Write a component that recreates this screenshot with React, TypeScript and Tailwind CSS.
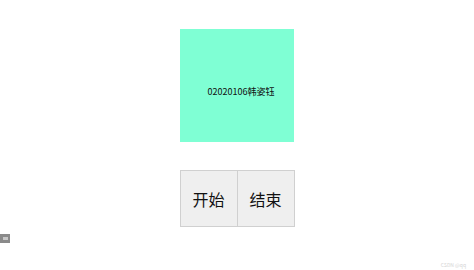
export default function App() {
  return (
    <div
      className="relative h-[270px] w-[474px] overflow-hidden bg-white"
      style={{ fontFamily: '"Noto Sans CJK SC", "Noto Sans", sans-serif' }}
    >
      <div className="flex flex-col items-center pt-[29px]">
        <div className="ml-[-1px] flex h-[113px] w-[114px] items-center justify-center bg-[#7fffd4] pl-[9px] pt-[13px] text-[9px] text-[#111]">
          02020106韩姿钰
        </div>
        <div className="mt-[28px] flex">
          <button className="flex h-[57px] w-[58px] items-center justify-center border border-[#d0d0d0] bg-[#efefef] text-[16px] text-[#111]">
            开始
          </button>
          <button className="ml-[-1px] flex h-[57px] w-[58px] items-center justify-center border border-[#d0d0d0] bg-[#efefef] text-[16px] text-[#111]">
            结束
          </button>
        </div>
      </div>

      {/* side widget at left edge */}
      <div className="absolute left-0 top-[234px] flex h-[9px] w-[10px] items-center justify-center bg-[#8a8a8a]">
        <div className="h-[3px] w-[5px] bg-[#c8c8c8]" />
      </div>

      {/* faint watermark */}
      <div className="absolute bottom-[2px] right-[8px] text-[5px] text-[#d4d4d4]">CSDN @qq</div>
    </div>
  );
}
